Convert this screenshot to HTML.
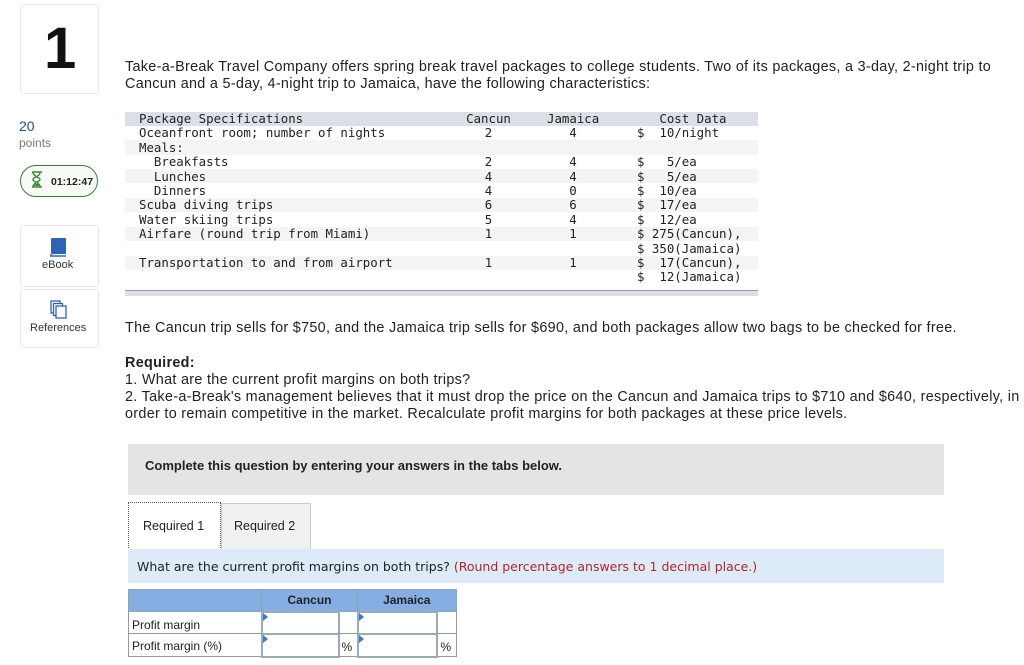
<!DOCTYPE html>
<html><head><meta charset="utf-8"><style>
body{margin:0;width:1024px;height:665px;overflow:hidden;background:#fff;font-family:"Liberation Sans",Arial,sans-serif;color:#222;position:relative}
.a{position:absolute;white-space:nowrap}
.box{position:absolute;border:1px solid #e8e8e8;border-radius:4px;background:#fff}
.p{font-size:14.4px;line-height:17px;color:#222;letter-spacing:0.3px}
.m{font-family:"DejaVu Sans Mono","Liberation Mono",monospace;font-size:12.4px;color:#222;white-space:pre}
.row{position:absolute;left:125px;width:633px;height:14.4px}
.sh{background:#f4f4f4}
.v{font-family:"DejaVu Sans",Verdana,sans-serif}
td{padding:0}
</style></head><body>
<div class="box" style="left:20px;top:4px;width:77px;height:88px"></div>
<div class="a" style="left:44px;top:14px;font-size:58px;line-height:70px;color:#111;font-weight:bold">1</div>
<div class="a" style="left:19px;top:118px;font-size:14px;color:#1f4e8c">20</div>
<div class="a" style="left:19px;top:136px;font-size:12px;color:#777">points</div>
<div class="a" style="left:20px;top:165px;width:76px;height:30px;border:1px solid #3f7a3f;border-radius:16px;background:#f7faf5"></div>
<svg class="a" style="left:31px;top:171px" width="12" height="17" viewBox="0 0 12 17"><path d="M1 1h10M1 16h10M2 1c0 5 7 5 7 7.5S2 11 2 16M9 1c0 5-7 5-7 7.5S9 11 9 16" stroke="#3a8a3a" stroke-width="1.4" fill="none"/><path d="M3 15c1-3 5-3 6 0z" fill="#3a8a3a"/></svg>
<div class="a" style="left:51px;top:176px;font-size:10.5px;font-weight:bold;color:#222">01:12:47</div>
<div class="box" style="left:20px;top:225px;width:77px;height:60px"></div>
<svg class="a" style="left:50px;top:238px" width="18" height="20" viewBox="0 0 18 20"><rect x="1" y="0" width="15" height="16" rx="1" fill="#2f63b4"/><path d="M1 16v2h15" stroke="#2f63b4" stroke-width="1.5" fill="none"/></svg>
<div class="a" style="left:42px;top:259px;font-size:11px;color:#333">eBook</div>
<div class="box" style="left:20px;top:289px;width:77px;height:57px"></div>
<svg class="a" style="left:50px;top:300px" width="18" height="19" viewBox="0 0 18 19"><rect x="1" y="1" width="9" height="12" fill="#fff" stroke="#2f63b4" stroke-width="1.3"/><rect x="3.5" y="3.5" width="9" height="12" fill="#fff" stroke="#2f63b4" stroke-width="1.3"/><rect x="6" y="6" width="10" height="12" fill="#fff" stroke="#2f63b4" stroke-width="1.3"/></svg>
<div class="a" style="left:30px;top:322px;font-size:11px;color:#333">References</div>

<div class="a p" style="left:125px;top:59px">Take-a-Break Travel Company offers spring break travel packages to college students. Two of its packages, a 3-day, 2-night trip to<br>Cancun and a 5-day, 4-night trip to Jamaica, have the following characteristics:</div>

<div class="row" style="top:111.5px;background:#dcdfe8"></div>
<div class="row sh" style="top:140.3px"></div>
<div class="row sh" style="top:169.1px"></div>
<div class="row sh" style="top:197.9px"></div>
<div class="row sh" style="top:226.7px"></div>
<div class="row sh" style="top:255.5px"></div>
<div class="a" style="left:125px;top:290px;width:633px;height:5px;background:#dcdfe8;border-top:1px solid #999"></div>
<div class="a m" style="left:139px;top:112px;margin:0;line-height:14.4px">Package Specifications
Oceanfront room; number of nights
Meals:
  Breakfasts
  Lunches
  Dinners
Scuba diving trips
Water skiing trips
Airfare (round trip from Miami)

Transportation to and from airport</div>
<div class="a m" style="left:466px;top:112px;margin:0;line-height:14.4px;text-align:center;width:45px">Cancun
2

2
4
4
6
5
1

1</div>
<div class="a m" style="left:547px;top:112px;margin:0;line-height:14.4px;text-align:center;width:52px">Jamaica
4

4
4
0
6
4
1

1</div>
<div class="a m" style="left:637px;top:112px;margin:0;line-height:14.4px">   Cost Data
$  10/night

$   5/ea
$   5/ea
$  10/ea
$  17/ea
$  12/ea
$ 275(Cancun),
$ 350(Jamaica)
$  17(Cancun),
$  12(Jamaica)</div>

<div class="a p" style="left:125px;top:320px">The Cancun trip sells for $750, and the Jamaica trip sells for $690, and both packages allow two bags to be checked for free.</div>
<div class="a p" style="left:125px;top:355px"><b>Required:</b><br>1. What are the current profit margins on both trips?<br>2. Take-a-Break's management believes that it must drop the price on the Cancun and Jamaica trips to $710 and $640, respectively, in<br>order to remain competitive in the market. Recalculate profit margins for both packages at these price levels.</div>

<div class="a" style="left:128px;top:444px;width:816px;height:51px;background:#e4e4e4"></div>
<div class="a" style="left:145px;top:458px;font-size:13px;font-weight:bold;color:#222">Complete this question by entering your answers in the tabs below.</div>

<div class="a" style="left:221px;top:503px;width:88px;height:45px;background:#f0f0f0;border:1px solid #ccc;border-bottom:none"></div>
<div class="a" style="left:128px;top:502px;width:91px;height:46px;border:1.5px dotted #557;background:#fff"></div>
<div class="a" style="left:143px;top:519px;font-size:12.5px;color:#222">Required 1</div>
<div class="a" style="left:234px;top:519px;font-size:12.5px;color:#222">Required 2</div>
<div class="a v" style="left:128px;top:549px;width:816px;height:34px;background:#ddeaf7"></div>
<div class="a v" style="left:137px;top:559px;font-size:12.5px;color:#222">What are the current profit margins on both trips? <span style="color:#b0262b">(Round percentage answers to 1 decimal place.)</span></div>

<table class="a" style="left:128px;top:589px;border-collapse:collapse;font-size:12px;color:#222">
<tr style="height:22px;background:#87aee3;font-weight:bold"><td style="width:132px;border:1px solid #8aa"></td><td colspan="2" style="text-align:center;border:1px solid #8aa">Cancun</td><td colspan="2" style="text-align:center;border:1px solid #8aa">Jamaica</td></tr>
<tr style="height:22px"><td style="border:1px solid #999;padding:4px 0 0 3px">Profit margin</td><td style="width:75px;border:2px solid #9ab;position:relative"><svg style="position:absolute;left:0;top:0" width="5" height="8"><path d="M0 0l5 4-5 4z" fill="#3a78c8"/></svg></td><td style="width:17px;border:1px solid #999"></td><td style="width:77px;border:2px solid #9ab;position:relative"><svg style="position:absolute;left:0;top:0" width="5" height="8"><path d="M0 0l5 4-5 4z" fill="#3a78c8"/></svg></td><td style="width:18px;border:1px solid #999"></td></tr>
<tr style="height:23px"><td style="border:1px solid #999;padding:2px 0 0 3px">Profit margin (%)</td><td style="border:2px solid #9ab;position:relative"><svg style="position:absolute;left:0;top:0" width="5" height="8"><path d="M0 0l5 4-5 4z" fill="#3a78c8"/></svg></td><td style="border:1px solid #999;padding:4px 0 0 2px">%</td><td style="border:2px solid #9ab;position:relative"><svg style="position:absolute;left:0;top:0" width="5" height="8"><path d="M0 0l5 4-5 4z" fill="#3a78c8"/></svg></td><td style="border:1px solid #999;padding:4px 0 0 3px">%</td></tr>
</table>
</body></html>
